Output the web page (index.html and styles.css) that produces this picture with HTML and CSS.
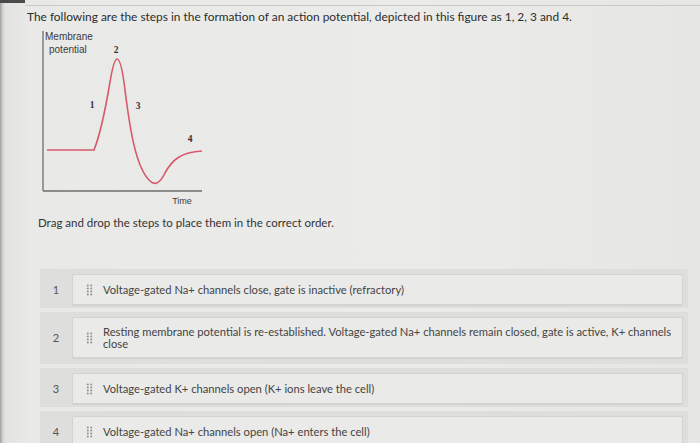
FILE: index.html
```html
<!DOCTYPE html>
<html>
<head>
<meta charset="utf-8">
<link rel="stylesheet" href="styles.css">
</head>
<body>
<div class="screen">
  <div class="topbar"><div class="corner"></div><div class="rule"></div></div>
  <div class="content">
    <p class="title">The following are the steps in the formation of an action potential, depicted in this figure as 1, 2, 3 and 4.</p>
    <svg class="graph" width="175" height="180" viewBox="35 25 175 180" xmlns="http://www.w3.org/2000/svg">
      <line x1="43" y1="29" x2="43" y2="189" stroke="#6d6d6d" stroke-width="1.3"/>
      <line x1="43" y1="189" x2="202" y2="189" stroke="#6d6d6d" stroke-width="1.3"/>
      <text x="45" y="38" class="axis">Membrane</text>
      <text x="49" y="51" class="axis">potential</text>
      <text x="116" y="51" class="num" text-anchor="middle">2</text>
      <text x="92" y="106" class="num" text-anchor="middle">1</text>
      <text x="138" y="107" class="num" text-anchor="middle">3</text>
      <text x="190" y="140" class="num" text-anchor="middle">4</text>
      <text x="182" y="202" class="axis small" text-anchor="middle">Time</text>
      <path d="M47 148 L94 148 C100 133 105 110 110 80 C113 62 115 57 117 57 C119 57 122 63 125 88 C130 128 136 166 150 179 C155 184 160 181 165 171 C172 158 181 150 202 149" fill="none" stroke="#d65a6a" stroke-width="1.6"/>
    </svg>
    <p class="instr">Drag and drop the steps to place them in the correct order.</p>
    <ol class="steps">
      <li class="row">
        <span class="idx">1</span>
        <div class="card"><span class="handle"></span><span class="text">Voltage-gated Na+ channels close, gate is inactive (refractory)</span></div>
      </li>
      <li class="row row-tall">
        <span class="idx">2</span>
        <div class="card tall"><span class="handle"></span><span class="text">Resting membrane potential is re-established. Voltage-gated Na+ channels remain closed, gate is active, K+ channels close</span></div>
      </li>
      <li class="row">
        <span class="idx">3</span>
        <div class="card"><span class="handle"></span><span class="text">Voltage-gated K+ channels open (K+ ions leave the cell)</span></div>
      </li>
      <li class="row">
        <span class="idx">4</span>
        <div class="card"><span class="handle"></span><span class="text">Voltage-gated Na+ channels open (Na+ enters the cell)</span></div>
      </li>
    </ol>
  </div>
</div>
</body>
</html>
```
FILE: styles.css
```css
* { box-sizing: border-box; }
html, body { margin: 0; padding: 0; }
body {
  width: 700px;
  height: 443px;
  overflow: hidden;
  background: #e7e7e5;
  font-family: Lato, "Open Sans", sans-serif;
  color: #333;
}
.screen {
  height: 443px;
  background: linear-gradient(90deg, #9c9c9a 0, #c9c9c7 2px, #e2e2e0 5px, #e9e9e7 30px, #ebebe9 60%, #e6e6e4 100%);
}
.topbar { display: flex; height: 6px; }
.corner { width: 25px; height: 3px; background: #4a4a4a; }
.rule { flex: 1; border-bottom: 1px solid #c9c9c7; }
.title {
  margin: 3px 0 0 27px;
  font-size: 11.9px;
  line-height: 15px;
  color: #2d2d2d;
}
.graph { display: block; margin: 3px 0 0 35px; }
.axis { font-family: "Liberation Sans", Arial, sans-serif; font-size: 10px; fill: #3a3a3a; }
.axis.small { font-size: 9px; }
.num { font-family: "Liberation Serif", serif; font-weight: bold; font-size: 9.5px; fill: #333; }
.instr {
  margin: 8px 0 0 38px;
  font-size: 11.5px;
  line-height: 15px;
  color: #333;
}
.steps {
  list-style: none;
  margin: 39px 0 0 40px;
  padding: 0;
  width: 648px;
  display: flex;
  flex-direction: column;
  gap: 4px;
}
.row {
  display: flex;
  align-items: center;
  background: #dededc;
  padding: 5px 5px 3px 0;
}
.row-tall { padding-bottom: 6px; }
.idx {
  width: 32px;
  text-align: center;
  font-size: 11px;
  color: #555;
}
.card {
  flex: 1;
  display: flex;
  align-items: center;
  gap: 10px;
  min-height: 31px;
  padding: 4px 2px 4px 13px;
  background: #eaeae8;
  border: 1px solid #d3d3d1;
  border-radius: 2px;
  box-shadow: 0 1px 1px rgba(0,0,0,0.06);
}
.card.tall { min-height: 41px; }
.handle {
  flex: none;
  width: 7px;
  height: 12px;
  background-image: radial-gradient(circle, #8d8d8b 0.9px, transparent 1.2px);
  background-size: 3.5px 3px;
}
.text {
  font-size: 11.2px;
  line-height: 12px;
  color: #444;
}
```
